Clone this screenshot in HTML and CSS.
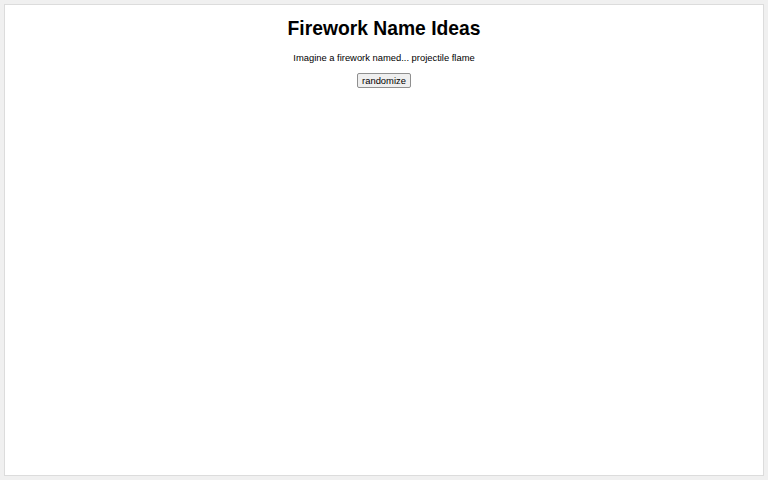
FILE: index.html
```html
<!DOCTYPE html>
<html>
<head>
<meta charset="utf-8">
<link rel="stylesheet" href="styles.css">
</head>
<body>
<main class="panel">
  <h1 class="title">Firework Name Ideas</h1>
  <p class="idea">Imagine a firework named... <span class="name">projectile flame</span></p>
  <button class="randomize" type="button">randomize</button>
</main>
</body>
</html>
```
FILE: styles.css
```css
html, body {
  margin: 0;
  height: 100%;
}
body {
  background: #f0f0f0;
  padding: 4px;
  box-sizing: border-box;
  font-family: "Liberation Sans", Arial, sans-serif;
}
.panel {
  height: 100%;
  box-sizing: border-box;
  background: #fff;
  border: 1px solid #dcdcdc;
  display: flex;
  flex-direction: column;
  align-items: center;
  padding-top: 13px;
}
.title {
  margin: 0;
  font-size: 19.3px;
  line-height: 22px;
  font-weight: bold;
  color: #000;
}
.idea {
  margin: 12px 0 0;
  font-size: 9.4px;
  line-height: 11px;
  color: #000;
}
.randomize {
  margin-top: 10px;
  font-family: "Liberation Sans", Arial, sans-serif;
  font-size: 9.4px;
  line-height: 11px;
  padding: 1px 4px;
  background: #efefef;
  border: 1px solid #8f8f8f;
  border-radius: 2px;
  color: #000;
}
```
